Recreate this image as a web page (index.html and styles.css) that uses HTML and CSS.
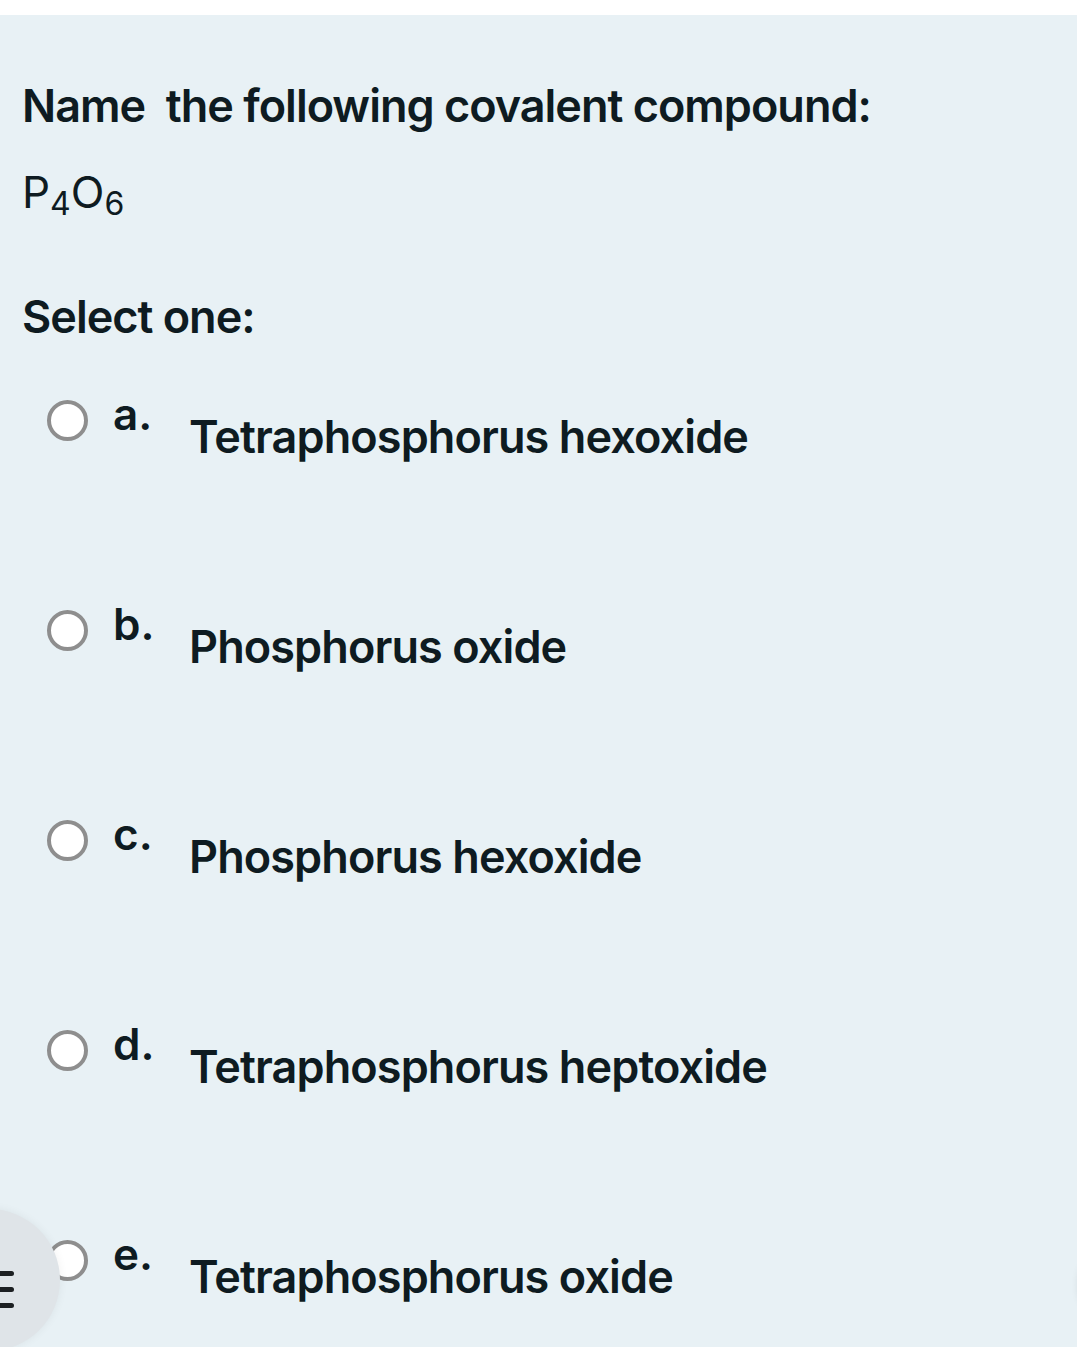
FILE: index.html
```html
<!DOCTYPE html>
<html>
<head>
<meta charset="utf-8">
<link rel="stylesheet" href="styles.css">
</head>
<body>
<div class="topbar"></div>
<main class="question">
  <h1 class="qtext">Name&nbsp; the following covalent compound:</h1>
  <p class="formula">P<sub>4</sub>O<sub>6</sub></p>
  <p class="prompt">Select one:</p>
  <div class="answers">
    <label class="option"><span class="radio"></span><span class="letter">a.</span><span class="answer">Tetraphosphorus hexoxide</span></label>
    <label class="option"><span class="radio"></span><span class="letter">b.</span><span class="answer">Phosphorus oxide</span></label>
    <label class="option"><span class="radio"></span><span class="letter">c.</span><span class="answer">Phosphorus hexoxide</span></label>
    <label class="option"><span class="radio"></span><span class="letter">d.</span><span class="answer">Tetraphosphorus heptoxide</span></label>
    <label class="option"><span class="radio"></span><span class="letter">e.</span><span class="answer">Tetraphosphorus oxide</span></label>
  </div>
</main>
<button class="fab-left" aria-label="Menu">
  <span class="bars"><span></span><span></span><span></span></span>
</button>
<div class="fab-right"></div>
</body>
</html>
```
FILE: styles.css
```css
html, body {
  margin: 0;
  padding: 0;
}
body {
  width: 1077px;
  height: 1347px;
  overflow: hidden;
  position: relative;
  background: #e8f1f5;
  font-family: Inter, "Noto Sans", sans-serif;
  color: #0e1b21;
}
.topbar {
  height: 15px;
  background: #ffffff;
}
.question {
  padding: 64px 24px 0 22px;
}
.qtext {
  margin: 0;
  font-size: 45px;
  line-height: 54px;
  font-weight: 600;
  letter-spacing: -1px;
}
.formula {
  margin: 32px 0 0 0;
  font-size: 44px;
  line-height: 54px;
  font-weight: 400;
}
.formula sub {
  font-size: 32px;
  vertical-align: -7px;
  line-height: 0;
}
.prompt {
  margin: 71px 0 0 0;
  font-size: 45px;
  line-height: 54px;
  font-weight: 600;
  letter-spacing: -1px;
}
.answers {
  margin-top: 43px;
  padding-left: 25px;
  display: flex;
  flex-direction: column;
}
.option {
  display: flex;
  align-items: flex-start;
  height: 210px;
}
.radio {
  box-sizing: border-box;
  width: 41px;
  height: 41px;
  margin-top: 13px;
  border: 4px solid #8e8e8e;
  border-radius: 50%;
  background: #ffffff;
  flex: none;
}
.letter {
  width: 76px;
  margin-left: 25px;
  font-size: 44px;
  line-height: 54px;
  font-weight: 600;
  flex: none;
}
.answer {
  padding-top: 23px;
  font-size: 45px;
  line-height: 54px;
  font-weight: 600;
  letter-spacing: -0.9px;
}
.fab-left {
  position: absolute;
  left: -82px;
  top: 1209px;
  width: 142px;
  height: 142px;
  border: none;
  border-radius: 50%;
  background: #dfe4e8;
  box-shadow: 0 0 10px rgba(0, 0, 0, 0.06);
  padding: 0;
}
.bars {
  position: absolute;
  left: 78px;
  top: 62px;
  display: flex;
  flex-direction: column;
  gap: 11px;
}
.bars span {
  display: block;
  width: 18px;
  height: 5px;
  border-radius: 2.5px;
  background: #1c1f22;
}
.fab-right {
  position: absolute;
  left: 1079px;
  top: 1245px;
  width: 80px;
  height: 80px;
  border-radius: 50%;
  background: #e8f1f5;
  box-shadow: 0 0 8px rgba(0, 0, 0, 0.12);
}
```
